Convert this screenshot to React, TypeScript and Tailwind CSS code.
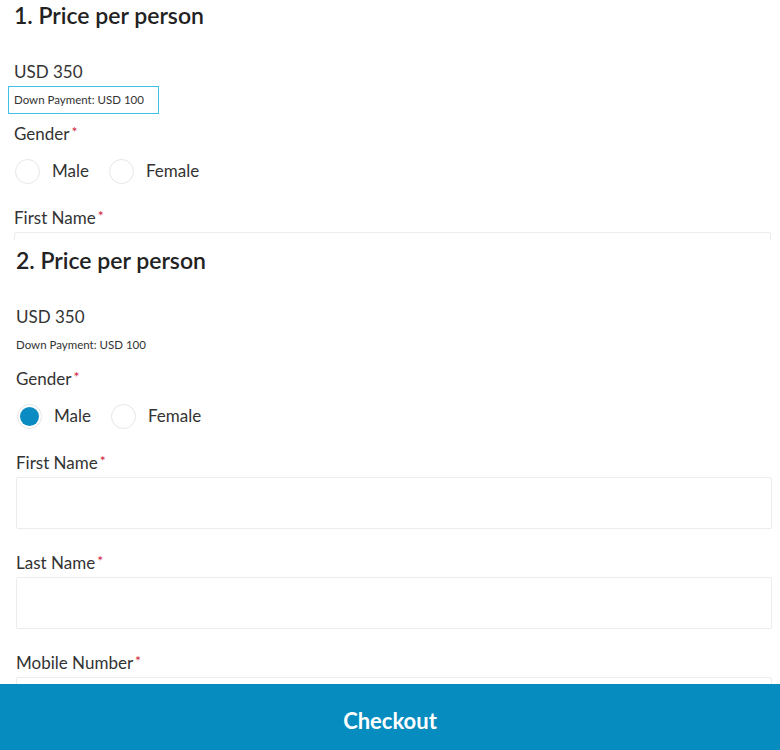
import React from "react";

const font = { fontFamily: "Lato, 'Noto Sans', sans-serif" };

function Req({ children }: { children: React.ReactNode }) {
  return (
    <div className="h-[24px] flex items-center text-[17px] text-[#333]">
      {children}
      <span className="text-[#d0213a] text-[14px] ml-[2px] -mt-[5px]">*</span>
    </div>
  );
}

function Radio({ label, checked }: { label: string; checked?: boolean }) {
  return (
    <div className="flex items-center">
      <span className="w-[25px] h-[25px] rounded-full border border-[#e6e6e6] flex items-center justify-center">
        {checked && <span className="w-[19px] h-[19px] rounded-full bg-[#0a8bc2]" />}
      </span>
      <span className="ml-[12px] text-[17px] text-[#333]">{label}</span>
    </div>
  );
}

function Input() {
  return <div className="h-[52px] border border-[#ececec] rounded-[2px] mt-[2px]" />;
}

function Section({ n, bordered, checked }: { n: number; bordered?: boolean; checked?: boolean }) {
  return (
    <div>
      <div className="h-[40px] flex items-center text-[23px] font-semibold text-[#222]">{n}. Price per person</div>
      <div className="mt-[25px] h-[24px] flex items-center text-[17px] text-[#333]">USD 350</div>
      <div
        className={
          "mt-[2px] -ml-[6px] h-[28px] w-[151px] flex items-center pl-[5px] text-[11.5px] text-[#333] border " +
          (bordered ? "border-[#3fc0e8]" : "border-transparent")
        }
      >
        Down Payment: USD 100
      </div>
      <div className="mt-[8px]">
        <Req>Gender</Req>
      </div>
      <div className="mt-[9px] h-[32px] flex items-center gap-[20px] pl-[1px]">
        <Radio label="Male" checked={checked} />
        <Radio label="Female" />
      </div>
      <div className="mt-[19px]">
        <Req>First Name</Req>
      </div>
      <Input />
      <div className="mt-[22px]">
        <Req>Last Name</Req>
      </div>
      <Input />
      <div className="mt-[22px]">
        <Req>Mobile Number</Req>
      </div>
      <Input />
    </div>
  );
}

export default function App() {
  return (
    <div className="w-[780px] h-[750px] flex flex-col bg-white overflow-hidden" style={font}>
      <div className="flex-1 overflow-hidden">
        <div className="h-[240px] overflow-hidden pl-[14px] pr-[9px]">
          <div className="-mt-[5px]">
            <Section n={1} bordered />
          </div>
        </div>
        <div className="pl-[16px] pr-[8px]">
          <Section n={2} checked />
        </div>
      </div>
      <div className="h-[66px] bg-[#078cbf] flex items-center justify-center pt-[6px] text-white text-[22px] font-bold">
        Checkout
      </div>
    </div>
  );
}
